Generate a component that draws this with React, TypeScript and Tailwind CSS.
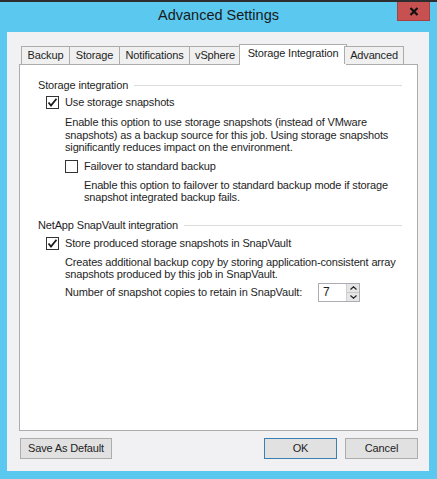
import React from "react";

const font = { fontFamily: '"Liberation Sans", Arial, sans-serif' };

function Check({ checked }: { checked: boolean }) {
  return (
    <div className="w-[13px] h-[13px] border border-[#333333] bg-white flex items-center justify-center shrink-0">
      {checked && (
        <svg width="11" height="11" viewBox="0 0 11 11">
          <path d="M1.5 5.5 L4 8.5 L9.5 1.8" stroke="#1a1a1a" strokeWidth="1.8" fill="none" />
        </svg>
      )}
    </div>
  );
}

function Group({ title }: { title: string }) {
  return (
    <div className="flex items-center h-[15px]">
      <span className="text-[#1e1e1e]">{title}</span>
      <div className="flex-1 h-px bg-[#dcdcdc] ml-[6px]" />
    </div>
  );
}

export default function App() {
  const tabs = [
    { label: "Backup", w: 48 },
    { label: "Storage", w: 50 },
    { label: "Notifications", w: 70 },
    { label: "vSphere", w: 51 },
    { label: "Storage Integration", w: 104, active: true },
    { label: "Advanced", w: 59 },
  ];
  return (
    <div className="w-[437px] h-[479px] bg-[#5ac8ef] flex flex-col overflow-hidden" style={font}>
      <div className="h-[2px] bg-[#2d2d30]" />
      <div className="h-[30px] relative flex items-center justify-center">
        <span className="text-[14.5px] text-[#1a1a1a] mb-[2px]">Advanced Settings</span>
        <div className="absolute top-0 right-[7px] w-[33px] h-[19px] bg-[#c75150] border border-[#a94040] border-t-0 flex items-center justify-center">
          <svg width="10" height="9" viewBox="0 0 10 9">
            <path d="M1.5 1 L8.5 8 M8.5 1 L1.5 8" stroke="#111" strokeWidth="2.2" />
          </svg>
        </div>
      </div>
      <div className="mx-[7px] mr-[8px] h-[439px] bg-[#f1f0f2] pl-[12px] pr-[11px] pt-[12px] flex flex-col text-[11px] tracking-[-0.15px] text-[#1e1e1e] whitespace-nowrap">
        <div className="flex items-end h-[20px] pl-[2px] relative z-10">
          {tabs.map((t) =>
            t.active ? (
              <div
                key={t.label}
                className="h-[21px] -mb-px -mx-[2px] bg-white border border-b-0 border-[#acacac] flex items-start justify-center pt-[2px] leading-[13px]"
                style={{ width: t.w + 4 }}
              >
                {t.label}
              </div>
            ) : (
              <div
                key={t.label}
                className="h-[18px] bg-[#f0f0f0] border border-b-0 border-[#acacac] -ml-px first:ml-0 flex items-center justify-center"
                style={{ width: t.w + 1 }}
              >
                {t.label}
              </div>
            )
          )}
        </div>
        <div className="h-[367px] bg-white border border-[#acacac] pl-[18px] pr-[15px] pt-[13px] leading-[12.5px]">
          <Group title="Storage integration" />
          <div className="flex items-center mt-[2px] ml-[8px] h-[15px]">
            <Check checked />
            <span className="ml-[6px]">Use storage snapshots</span>
          </div>
          <div className="ml-[27px] mt-[6px]">
            Enable this option to use storage snapshots (instead of VMware
            <br />
            snapshots) as a backup source for this job. Using storage snapshots
            <br />
            significantly reduces impact on the environment.
          </div>
          <div className="flex items-center mt-[5px] ml-[27px] h-[15px]">
            <Check checked={false} />
            <span className="ml-[6px]">Failover to standard backup</span>
          </div>
          <div className="ml-[46px] mt-[5px]">
            Enable this option to failover to standard backup mode if storage
            <br />
            snapshot integrated backup fails.
          </div>
          <div className="mt-[14px]">
            <Group title="NetApp SnapVault integration" />
          </div>
          <div className="flex items-center mt-[3px] ml-[8px] h-[15px]">
            <Check checked />
            <span className="ml-[6px]">Store produced storage snapshots in SnapVault</span>
          </div>
          <div className="ml-[27px] mt-[5px]">
            Creates additional backup copy by storing application-consistent array
            <br />
            snapshots produced by this job in SnapVault.
          </div>
          <div className="flex items-center ml-[27px] mt-[2px] h-[20px]">
            <span className="w-[253px]">Number of snapshot copies to retain in SnapVault:</span>
            <div className="flex h-[19px] border border-[#abadb3]">
              <div className="w-[27px] bg-white pl-[4px] flex items-center text-[12px]">7</div>
              <div className="w-[13px] flex flex-col border-l border-[#d0d0d0]">
                <div className="flex-1 bg-[#e6e6e6] border-b border-[#c8c8c8] flex items-center justify-center">
                  <svg width="7" height="4" viewBox="0 0 7 4">
                    <path d="M0.5 3.5 L3.5 0.8 L6.5 3.5" stroke="#222" strokeWidth="1.2" fill="none" />
                  </svg>
                </div>
                <div className="flex-1 bg-[#e6e6e6] flex items-center justify-center">
                  <svg width="7" height="4" viewBox="0 0 7 4">
                    <path d="M0.5 0.5 L3.5 3.2 L6.5 0.5" stroke="#222" strokeWidth="1.2" fill="none" />
                  </svg>
                </div>
              </div>
            </div>
          </div>
        </div>
        <div className="flex items-center mt-[7px] pl-[1px]">
          <div className="w-[92px] h-[21px] bg-[#e1e1e1] border border-[#adadad] flex items-center justify-center">
            Save As Default
          </div>
          <div className="flex-1" />
          <div className="w-[73px] h-[21px] bg-[#e1e1e1] border border-[#3c7fb1] flex items-center justify-center">
            OK
          </div>
          <div className="w-[73px] h-[21px] ml-[8px] bg-[#e1e1e1] border border-[#adadad] flex items-center justify-center">
            Cancel
          </div>
        </div>
      </div>
    </div>
  );
}
